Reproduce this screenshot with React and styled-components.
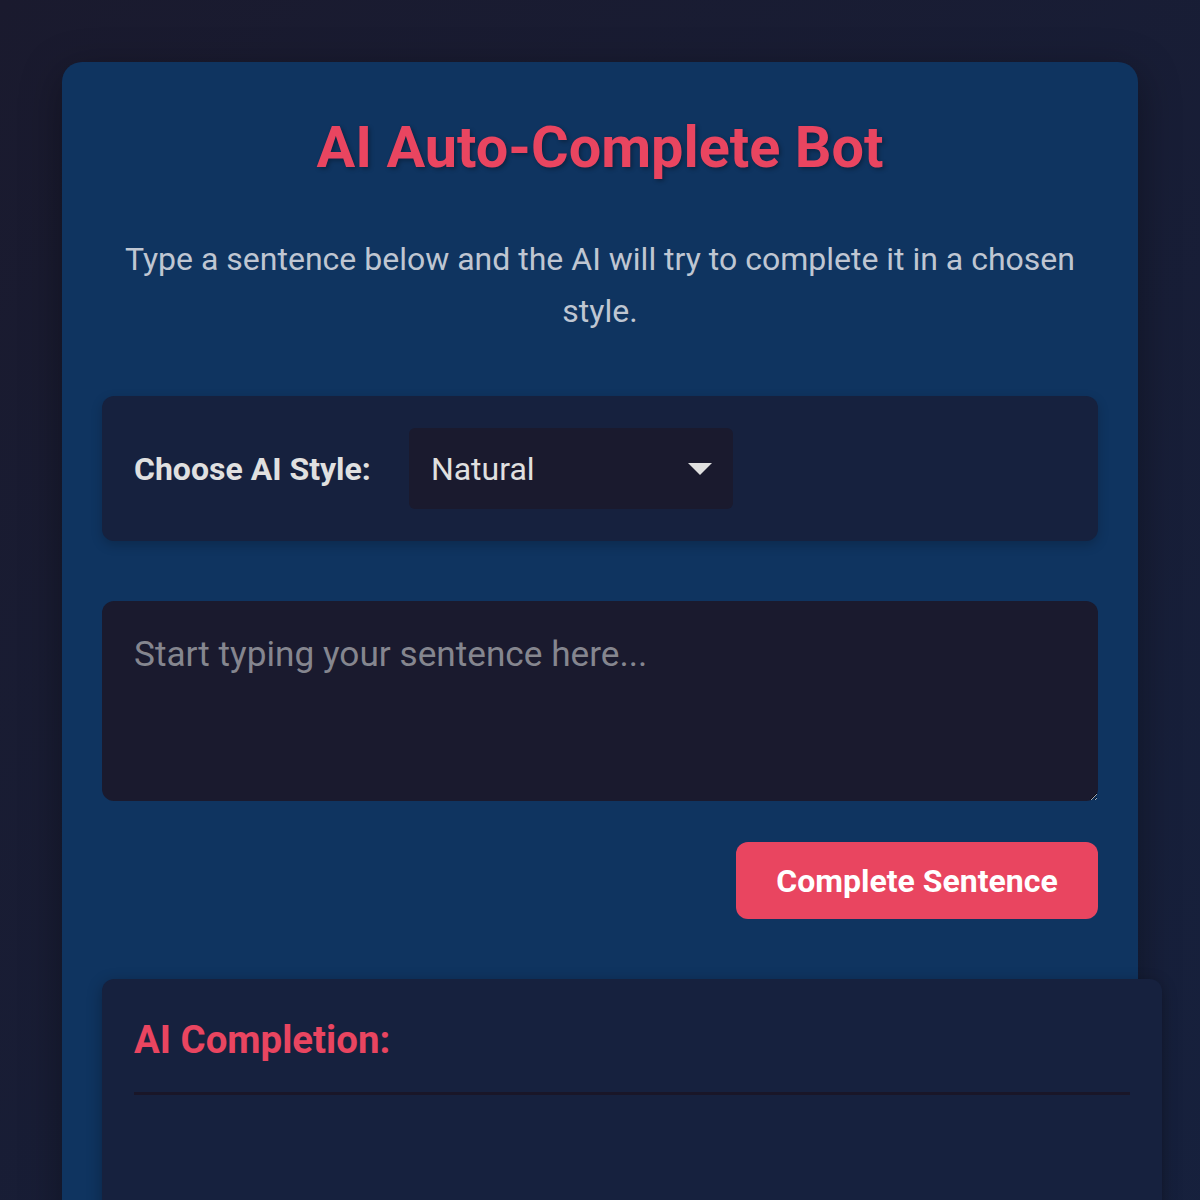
import React, { useState } from 'react';
import styled, { createGlobalStyle } from 'styled-components';

const GlobalStyle = createGlobalStyle`
  * {
    box-sizing: border-box;
  }
  body {
    margin: 0;
    font-family: Roboto, "Liberation Sans", sans-serif;
    background: linear-gradient(135deg, #1a1a2e 0%, #16213e 100%);
    color: #e0e0e0;
    min-height: 100vh;
  }
`;

const Page = styled.div`
  padding: 62px 62px 80px;
`;

const Container = styled.div`
  background: #0f3460;
  border-radius: 20px;
  padding: 40px;
  box-shadow: 0 10px 40px rgba(0, 0, 0, 0.35);
`;

const Title = styled.h1`
  margin: 12px 0 0;
  text-align: center;
  color: #e94560;
  font-size: 57.6px;
  font-weight: 700;
  text-shadow: 2px 2px 4px rgba(0, 0, 0, 0.3);
`;

const Subtitle = styled.p`
  margin: 52px 0 59px;
  text-align: center;
  color: #bfc6d2;
  font-size: 32px;
  line-height: 52px;
`;

const Controls = styled.div`
  display: flex;
  align-items: center;
  gap: 38px;
  background: #16213e;
  border-radius: 12px;
  padding: 32px;
  box-shadow: 0 4px 12px rgba(0, 0, 0, 0.2);
`;

const Label = styled.label`
  font-size: 32px;
  font-weight: 700;
  color: #e0e0e0;
`;

const SelectWrap = styled.div`
  position: relative;
  width: 324px;
  height: 81px;
`;

const Select = styled.select`
  appearance: none;
  width: 100%;
  height: 100%;
  border: none;
  border-radius: 6px;
  background: #1a1a2e;
  color: #e0e0e0;
  font-family: inherit;
  font-size: 32px;
  padding: 0 60px 0 22px;
  outline: none;
`;

const Arrow = styled.svg`
  position: absolute;
  right: 21px;
  top: 35px;
  pointer-events: none;
`;

const TextArea = styled.textarea`
  display: block;
  width: 100%;
  height: 200px;
  margin-top: 60px;
  padding: 32px;
  border: none;
  border-radius: 12px;
  background: #1a1a2e;
  color: #e0e0e0;
  font-family: inherit;
  font-size: 35.2px;
  outline: none;
  resize: vertical;

  &::placeholder {
    color: #85868f;
  }
`;

const Actions = styled.div`
  display: flex;
  justify-content: flex-end;
  margin-top: 41px;
`;

const Button = styled.button`
  height: 77px;
  width: 362px;
  border: none;
  border-radius: 12px;
  background: #e94560;
  color: #fff;
  font-family: inherit;
  font-size: 32px;
  font-weight: 700;
  cursor: pointer;
`;

const Result = styled.div`
  box-sizing: content-box;
  width: 100%;
  margin-top: 60px;
  padding: 32px;
  background: #16213e;
  border-radius: 12px;
  box-shadow: 0 4px 15px rgba(0, 0, 0, 0.3);
  min-height: 260px;
`;

const ResultTitle = styled.h2`
  margin: 6px 0 0;
  padding-bottom: 30px;
  border-bottom: 3px solid #191628;
  color: #e94560;
  font-size: 38.4px;
  font-weight: 700;
`;

const ResultText = styled.p`
  margin: 24px 0 0;
  font-size: 28.8px;
  line-height: 1.6;
  color: #e0e0e0;
`;

export default function App() {
  const [style, setStyle] = useState('natural');
  const [text, setText] = useState('');

  return (
    <>
      <GlobalStyle />
      <Page>
        <Container>
          <Title>AI Auto-Complete Bot</Title>
          <Subtitle>
            Type a sentence below and the AI will try to complete it in a chosen style.
          </Subtitle>

          <Controls>
            <Label htmlFor="style">Choose AI Style:</Label>
            <SelectWrap>
              <Select id="style" value={style} onChange={(e) => setStyle(e.target.value)}>
                <option value="natural">Natural</option>
                <option value="formal">Formal</option>
                <option value="funny">Funny</option>
                <option value="poetic">Poetic</option>
              </Select>
              <Arrow width="24" height="12" viewBox="0 0 24 12">
                <path d="M0 0h24L12 12z" fill="#e0e0e0" />
              </Arrow>
            </SelectWrap>
          </Controls>

          <TextArea
            placeholder="Start typing your sentence here..."
            value={text}
            onChange={(e) => setText(e.target.value)}
          />

          <Actions>
            <Button>Complete Sentence</Button>
          </Actions>

          <Result>
            <ResultTitle>AI Completion:</ResultTitle>
            <ResultText />
          </Result>
        </Container>
      </Page>
    </>
  );
}
